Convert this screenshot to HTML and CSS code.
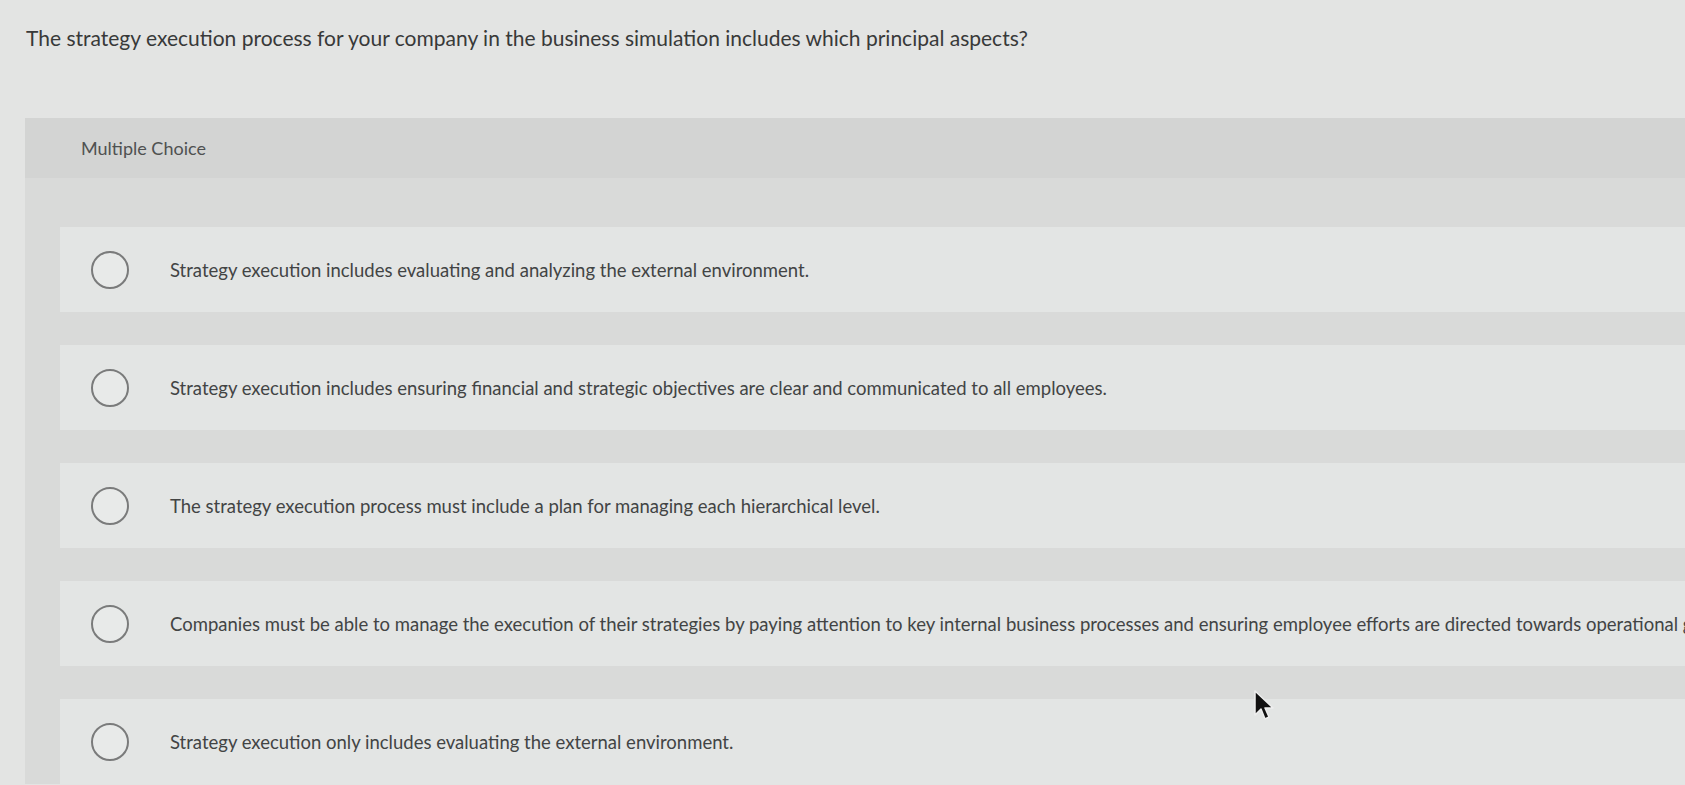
FILE: index.html
```html
<!DOCTYPE html>
<html lang="en">
<head>
<meta charset="utf-8">
<title>Multiple Choice</title>
<link rel="stylesheet" href="styles.css">
</head>
<body>
<div class="question">The strategy execution process for your company in the business simulation includes which principal aspects?</div>
<div class="panel">
  <div class="panel-head">Multiple Choice</div>
  <div class="head-gap"></div>
  <div class="options">
    <div class="option"><span class="radio"></span><span class="label">Strategy execution includes evaluating and analyzing the external environment.</span></div>
    <div class="option"><span class="radio"></span><span class="label">Strategy execution includes ensuring financial and strategic objectives are clear and communicated to all employees.</span></div>
    <div class="option"><span class="radio"></span><span class="label">The strategy execution process must include a plan for managing each hierarchical level.</span></div>
    <div class="option"><span class="radio"></span><span class="label">Companies must be able to manage the execution of their strategies by paying attention to key internal business processes and ensuring employee efforts are directed towards operational goals.</span></div>
    <div class="option"><span class="radio"></span><span class="label">Strategy execution only includes evaluating the external environment.</span></div>
  </div>
</div>
<svg class="cursor" width="26" height="34" viewBox="0 0 26 34"><path d="M2 2 L2 26 L8 20 L12 30 L16 28 L12 19 L20 19 Z" fill="#111" stroke="#eee" stroke-width="1.5" stroke-linejoin="round"/></svg>
</body>
</html>
```
FILE: styles.css
```css
html, body {
  margin: 0;
  padding: 0;
}
body {
  background: #e3e4e3;
  font-family: Lato, "Open Sans", sans-serif;
  width: 1685px;
  height: 785px;
  overflow: hidden;
  position: relative;
}
.question {
  height: 118px;
  box-sizing: border-box;
  padding: 26px 0 0 26px;
  font-size: 21px;
  line-height: 24px;
  color: #383939;
  white-space: nowrap;
}
.panel {
  margin-left: 25px;
  background: #d9dad9;
}
.panel-head {
  height: 60px;
  box-sizing: border-box;
  padding: 20px 0 0 56px;
  background: #d3d4d3;
  font-size: 18px;
  line-height: 20px;
  color: #4f5151;
}
.head-gap {
  height: 49px;
  background: #d9dad9;
}
.options {
  display: flex;
  flex-direction: column;
  gap: 33px;
  padding-left: 35px;
}
.option {
  height: 85px;
  background: #e3e5e4;
  display: flex;
  align-items: center;
  white-space: nowrap;
  overflow: hidden;
}
.radio {
  flex: none;
  width: 38px;
  height: 38px;
  border: 2px solid #7a7b7b;
  border-radius: 50%;
  margin-left: 31px;
  box-sizing: border-box;
  background: #e8eae9;
}
.label {
  margin-left: 41px;
  font-size: 18.5px;
  line-height: 22px;
  color: #424444;
}
.cursor {
  position: absolute;
  left: 1253px;
  top: 689px;
}
```
